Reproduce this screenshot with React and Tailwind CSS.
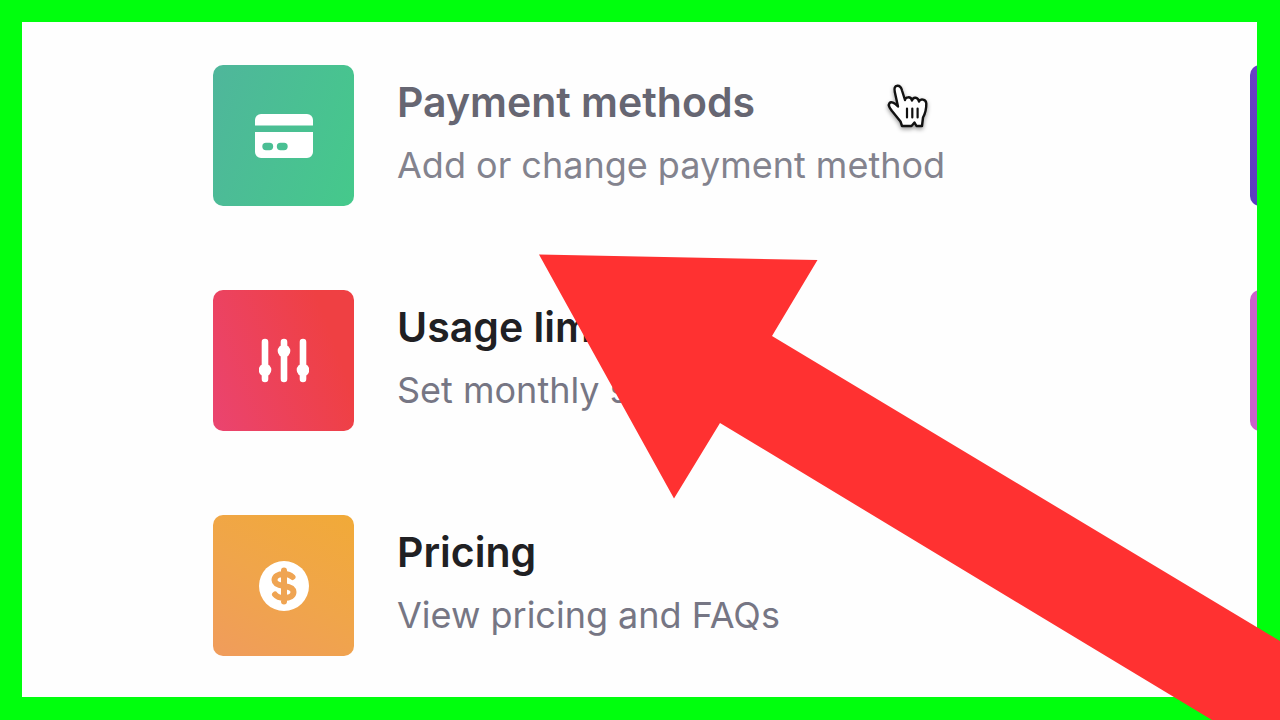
import React from "react";

function CardIcon() {
  return (
    <svg viewBox="0 0 58 44" className="h-[44px] w-[58px]" fill="#fff" aria-hidden="true">
      <path d="M6 0H52A6 6 0 0 1 58 6V11.5H0V6A6 6 0 0 1 6 0Z" />
      <path
        fillRule="evenodd"
        d="M0 18H58V38A6 6 0 0 1 52 44H6A6 6 0 0 1 0 38ZM11 28.8A3.7 3.7 0 0 0 11 36.2H14.5A3.7 3.7 0 0 0 14.5 28.8ZM25.5 28.8A3.7 3.7 0 0 0 25.5 36.2H29A3.7 3.7 0 0 0 29 28.8Z"
      />
    </svg>
  );
}

function SlidersIcon() {
  return (
    <svg viewBox="0 0 50 46" className="h-[46px] w-[50px]" fill="#fff" aria-hidden="true">
      <path d="M6 4V41M25 4V41M44 4V41" stroke="#fff" strokeWidth="6.6" strokeLinecap="round" />
      <circle cx="6" cy="32" r="6.3" />
      <circle cx="25" cy="13" r="6.3" />
      <circle cx="44" cy="32" r="6.3" />
    </svg>
  );
}

function DollarIcon() {
  return (
    <svg viewBox="0 0 50 50" className="h-[50px] w-[50px]" fill="none" aria-hidden="true">
      <circle cx="25" cy="25" r="25" fill="#fff" />
      <path
        d="M25 9.5V40.5M33.5 16C31.5 14 28.5 13 25 13C19 13 15.5 15.5 15.5 19C15.5 23 19.5 24.2 25 25C30.5 25.8 34.5 27.2 34.5 31C34.5 34.8 31 37 25 37C21 37 18 36 16 33.5"
        stroke="#efa452"
        strokeWidth="6"
        strokeLinecap="round"
        strokeLinejoin="round"
      />
    </svg>
  );
}

const ITEMS = [
  {
    title: "Payment methods",
    text: "Add or change payment method",
    tile: "bg-[linear-gradient(110deg,#4fb69b,#45c98b)]",
    titleColor: "text-[#666672]",
    textColor: "text-[#83838e]",
    Icon: CardIcon,
  },
  {
    title: "Usage limits",
    text: "Set monthly spend limits",
    tile: "bg-[linear-gradient(70deg,#ea4470,#ef4043_80%)]",
    titleColor: "text-[#202023]",
    textColor: "text-[#767684]",
    Icon: SlidersIcon,
  },
  {
    title: "Pricing",
    text: "View pricing and FAQs",
    tile: "bg-[linear-gradient(30deg,#f09c5c,#f0a54a_50%,#f1aa38)]",
    titleColor: "text-[#202023]",
    textColor: "text-[#767684]",
    Icon: DollarIcon,
  },
];

const TILE = "flex h-[141px] w-[141px] shrink-0 items-center justify-center rounded-[10px]";

function PointerHand() {
  return (
    <svg
      viewBox="0 0 50 50"
      className="pointer-events-none absolute left-[883px] top-[80px] h-[50px] w-[50px] drop-shadow-[0_2px_2px_rgba(0,0,0,0.4)]"
      aria-hidden="true"
    >
      <path
        d="M19 46L17.5 41.5L9 31C6.5 27.5 4.8 25.5 6.4 23.2C8 21.2 11.5 22.7 15 26.5L11.8 12C11 8.5 11.6 6 14.4 5.8C17 5.7 18.3 7.5 19 10.5L22 20C22.2 16.7 28 16 29 20.5C30.2 16.5 35 17 36 21.5C37.3 18.5 43 19 43.3 23.5C43.4 30 42.5 33 40 37.5L39 46H33.5L31.5 42.5L28.5 46Z"
        fill="#fff"
        stroke="#111"
        strokeWidth="2.4"
        strokeLinejoin="round"
      />
      <path d="M24 28.5V37.5M29.3 28.5V37.5M34.6 28.5V37.5" stroke="#111" strokeWidth="2.2" strokeLinecap="round" />
    </svg>
  );
}

function Arrow() {
  return (
    <svg
      viewBox="0 0 741 466"
      className="pointer-events-none absolute bottom-0 right-0 h-[466px] w-[741px]"
      aria-hidden="true"
    >
      <path d="M0 0.5L278.5 6L233 82L741 387V466H673L181 169L135 244.5Z" fill="#ff3131" />
    </svg>
  );
}

export default function App() {
  return (
    <div className="relative flex min-h-screen overflow-hidden bg-[#00ff0d] pb-[23px] pl-[22px] pr-[23px] pt-[22px] font-['Inter',sans-serif]">
      <main className="flex min-w-0 flex-1 overflow-hidden bg-[#fefefe] pb-10 pl-[191px] pt-[43px]">
        <ul className="flex min-w-0 flex-1 flex-col gap-[84px]">
          {ITEMS.map(({ title, text, tile, titleColor, textColor, Icon }) => (
            <li key={title}>
              <a href="#" className="flex gap-[43px]">
                <span className={`${TILE} ${tile}`}>
                  <Icon />
                </span>
                <span className="flex flex-col gap-[15px] pt-[13px] whitespace-nowrap">
                  <span className={`text-[41px] font-semibold leading-[48px] ${titleColor}`}>{title}</span>
                  <span className={`text-[36px] leading-[48px] ${textColor}`}>{text}</span>
                </span>
              </a>
            </li>
          ))}
        </ul>
        <ul className="flex w-[7px] shrink-0 flex-col gap-[84px]">
          <li className={`${TILE} bg-[linear-gradient(180deg,#6a40c4,#5b3cc0)]`} />
          <li className={`${TILE} bg-[#cb61cb]`} />
        </ul>
      </main>
      <PointerHand />
      <Arrow />
    </div>
  );
}
